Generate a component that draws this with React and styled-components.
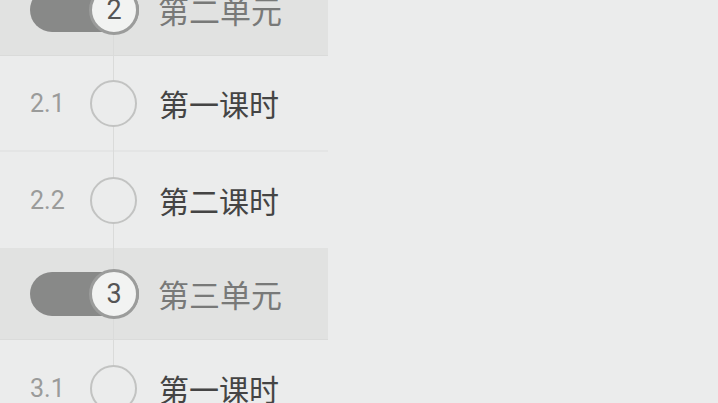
import React from "react";
import styled, { createGlobalStyle } from "styled-components";

const GlobalStyle = createGlobalStyle`
  html, body {
    margin: 0;
    padding: 0;
    background: #ebecec;
    overflow: hidden;
  }
  body {
    font-family: "Roboto", "Noto Sans CJK SC", sans-serif;
  }
`;

const Page = styled.div`
  width: 718px;
  height: 403px;
  overflow: hidden;
  background: #ebecec;
`;

const List = styled.ul`
  position: relative;
  width: 328px;
  margin: -36px 0 0;
  padding: 0;
  list-style: none;
  &::before {
    content: "";
    position: absolute;
    top: 0;
    bottom: 0;
    left: 113px;
    width: 1px;
    background: #dadbda;
    z-index: 1;
  }
`;

const UnitRow = styled.li`
  display: flex;
  align-items: center;
  height: 92px;
  padding-left: 30px;
  background: #e1e2e1;
  border-bottom: 1px solid #dadbda;
  box-sizing: border-box;
`;

const Toggle = styled.div`
  display: flex;
  align-items: center;
  justify-content: flex-end;
  width: 109px;
  height: 44px;
  border-radius: 22px;
  background: #888988;
`;

const Knob = styled.span`
  position: relative;
  z-index: 2;
  display: flex;
  align-items: center;
  justify-content: center;
  width: 50px;
  height: 50px;
  box-sizing: border-box;
  border-radius: 50%;
  border: 3px solid #9b9c9b;
  background: #f2f3f2;
  color: #555;
  font-size: 27px;
  font-weight: 400;
`;

const UnitTitle = styled.span`
  margin-left: 19px;
  font-family: "Noto Sans CJK SC", sans-serif;
  font-size: 31px;
  color: #787978;
`;

const LessonRow = styled.li`
  display: flex;
  align-items: center;
  height: 96px;
  padding-left: 30px;
  box-sizing: border-box;
  background: #ebecec;
  border-bottom: ${(p) => (p.$last ? "none" : "2px solid #e4e5e5")};
`;

const LessonNo = styled.span`
  width: 60px;
  font-size: 25px;
  font-weight: 400;
  color: #9a9b9a;
`;

const Dot = styled.span`
  position: relative;
  z-index: 2;
  width: 47px;
  height: 47px;
  box-sizing: border-box;
  border-radius: 50%;
  border: 2.5px solid #c2c3c2;
  background: #ebecec;
`;

const LessonTitle = styled.span`
  margin-left: 22px;
  font-family: "Noto Sans CJK SC", sans-serif;
  font-size: 30px;
  color: #444;
`;

const units = [
  {
    no: 2,
    title: "第二单元",
    lessons: [
      { no: "2.1", title: "第一课时" },
      { no: "2.2", title: "第二课时" },
    ],
  },
  {
    no: 3,
    title: "第三单元",
    lessons: [{ no: "3.1", title: "第一课时" }],
  },
];

export default function App() {
  return (
    <>
      <GlobalStyle />
      <Page>
        <List>
          {units.map((u) => (
            <React.Fragment key={u.no}>
              <UnitRow>
                <Toggle>
                  <Knob>{u.no}</Knob>
                </Toggle>
                <UnitTitle>{u.title}</UnitTitle>
              </UnitRow>
              {u.lessons.map((l, idx) => (
                <LessonRow key={l.no} $last={idx === u.lessons.length - 1}>
                  <LessonNo>{l.no}</LessonNo>
                  <Dot />
                  <LessonTitle>{l.title}</LessonTitle>
                </LessonRow>
              ))}
            </React.Fragment>
          ))}
        </List>
      </Page>
    </>
  );
}
